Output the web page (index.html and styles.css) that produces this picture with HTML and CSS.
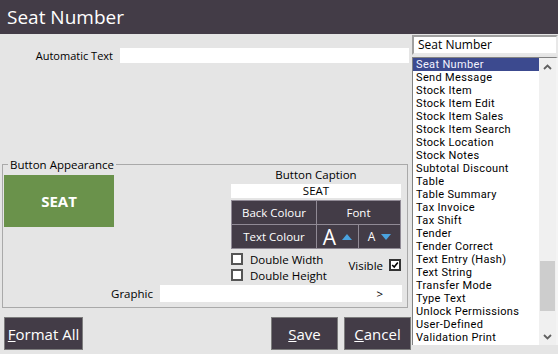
FILE: index.html
```html
<!DOCTYPE html>
<html lang="en">
<head>
    <meta charset="UTF-8" />
    <meta name="viewport" content="width=device-width, initial-scale=1" />
    <title>Seat Number</title>
    <link rel="stylesheet" href="styles.css">
</head>
<body>

    <div class="titulo">Seat Number</div>

    <div class="ventana">
        <div class="izquierda">
            <div class="fila-texto">
                <label>Automatic Text</label>
                <div class="campo campo-auto"></div>
            </div>

            <fieldset class="apariencia">
                <legend>Button Appearance</legend>
                <div class="apariencia-cuerpo">
                    <div class="vista">SEAT</div>
                    <div class="panel-caption">
                        <div class="caption-label">Button Caption</div>
                        <div class="campo campo-caption">SEAT</div>
                        <div class="rejilla">
                            <div class="celda">Back Colour</div>
                            <div class="celda doble">Font</div>
                            <div class="celda">Text Colour</div>
                            <div class="celda">
                                <span class="letra-grande">A</span>
                                <svg width="10" height="6" viewBox="0 0 10 6"><polygon points="0,6 5,0 10,6" fill="#4aa3df"/></svg>
                            </div>
                            <div class="celda">
                                <span class="letra-chica">A</span>
                                <svg width="10" height="6" viewBox="0 0 10 6"><polygon points="0,0 10,0 5,6" fill="#4aa3df"/></svg>
                            </div>
                        </div>
                        <div class="checks">
                            <div class="checks-col">
                                <div class="check"><span class="caja"></span>Double Width</div>
                                <div class="check"><span class="caja"></span>Double Height</div>
                            </div>
                            <div class="check visible">Visible<span class="caja marcada">
                                <svg width="10" height="10" viewBox="0 0 10 10"><polyline points="1.5,5 4,7.5 8.5,2" fill="none" stroke="#000" stroke-width="2"/></svg>
                            </span></div>
                        </div>
                    </div>
                </div>
                <div class="fila-grafico">
                    <label>Graphic</label>
                    <div class="campo campo-grafico">&gt;</div>
                </div>
            </fieldset>

            <div class="botones">
                <button class="boton boton-format"><u>F</u>ormat All</button>
                <button class="boton boton-save"><u>S</u>ave</button>
                <button class="boton boton-cancel"><u>C</u>ancel</button>
            </div>
        </div>

        <div class="derecha">
            <div class="combo">Seat Number</div>
            <div class="lista">
                <ul class="items">
                    <li class="seleccionado">Seat Number</li>
                    <li>Send Message</li>
                    <li>Stock Item</li>
                    <li>Stock Item Edit</li>
                    <li>Stock Item Sales</li>
                    <li>Stock Item Search</li>
                    <li>Stock Location</li>
                    <li>Stock Notes</li>
                    <li>Subtotal Discount</li>
                    <li>Table</li>
                    <li>Table Summary</li>
                    <li>Tax Invoice</li>
                    <li>Tax Shift</li>
                    <li>Tender</li>
                    <li>Tender Correct</li>
                    <li>Text Entry (Hash)</li>
                    <li>Text String</li>
                    <li>Transfer Mode</li>
                    <li>Type Text</li>
                    <li>Unlock Permissions</li>
                    <li>User-Defined</li>
                    <li>Validation Print</li>
                </ul>
                <div class="scroll">
                    <div class="flecha">
                        <svg width="9" height="6" viewBox="0 0 9 6"><polyline points="1,5 4.5,1.5 8,5" fill="none" stroke="#606060" stroke-width="1.8"/></svg>
                    </div>
                    <div class="pista"><div class="pulgar"></div></div>
                    <div class="flecha">
                        <svg width="9" height="6" viewBox="0 0 9 6"><polyline points="1,1 4.5,4.5 8,1" fill="none" stroke="#606060" stroke-width="1.8"/></svg>
                    </div>
                </div>
            </div>
        </div>
    </div>

</body>
</html>
```

FILE: styles.css
```css
body {
    font-family: 'Open Sans', 'Noto Sans', sans-serif;
    background-color: #e5e5e5;
    margin: 0;
    width: 558px;
    height: 354px;
    overflow: hidden;
    color: #000;
    font-size: 11.5px;
}

.titulo {
    background-color: #433c47;
    color: white;
    height: 34px;
    font-size: 19px;
    line-height: 34px;
    padding-left: 7px;
}

.ventana {
    display: flex;
    gap: 1px;
}

.izquierda {
    width: 411px;
    display: flex;
    flex-direction: column;
}

.campo {
    background-color: white;
    box-sizing: border-box;
}

/* fila automatic text */
.fila-texto {
    display: flex;
    align-items: center;
    margin-top: 14px;
    gap: 7px;
}

.fila-texto label {
    flex: 1;
    text-align: right;
    font-size: 11px;
}

.campo-auto {
    width: 289px;
    height: 15px;
    margin-right: 2px;
}

/* grupo button appearance */
.apariencia {
    margin: 95px 2px 0 2px;
    width: 406px;
    box-sizing: border-box;
    padding: 0 0 5px 1px;
    border: 1px solid #a9a9a9;
}

.apariencia legend {
    margin-left: 4px;
    padding: 0 2px;
    line-height: 13px;
}

.apariencia-cuerpo {
    display: flex;
    align-items: flex-start;
}

.vista {
    width: 110px;
    height: 52px;
    margin-top: 4px;
    background-color: #6a924b;
    color: white;
    font-weight: bold;
    font-size: 15px;
    display: flex;
    align-items: center;
    justify-content: center;
}

.panel-caption {
    width: 170px;
    margin-left: auto;
    margin-right: 6px;
    margin-top: -3px;
}

.caption-label {
    text-align: center;
    line-height: 14px;
}

.campo-caption {
    margin-top: 2px;
    height: 14px;
    line-height: 14px;
    text-align: center;
}

.rejilla {
    margin-top: 2px;
    display: grid;
    grid-template-columns: 84px 41px 41px;
    grid-auto-rows: 23px;
    gap: 1px;
    padding: 1px;
    background-color: #908a95;
}

.celda {
    background-color: #433c47;
    color: white;
    display: flex;
    align-items: center;
    justify-content: center;
    gap: 6px;
}

.celda.doble {
    grid-column: span 2;
}

.letra-grande {
    font-size: 21px;
    line-height: 20px;
}

.letra-chica {
    font-size: 12px;
}

.checks {
    margin-top: 2px;
    display: flex;
    justify-content: space-between;
}

.check {
    height: 16px;
    display: flex;
    align-items: center;
    gap: 7px;
}

.check.visible {
    align-self: center;
    margin-bottom: 4px;
    gap: 6px;
}

.caja {
    width: 12px;
    height: 12px;
    box-sizing: border-box;
    border: 2px solid #555;
    background-color: white;
    display: flex;
    align-items: center;
    justify-content: center;
}

.caja.marcada {
    border-color: #333;
}

.fila-grafico {
    display: flex;
    align-items: center;
    justify-content: flex-end;
    gap: 7px;
    margin-top: 2px;
}

.campo-grafico {
    width: 242px;
    height: 17px;
    margin-right: 5px;
    text-align: right;
    padding-right: 19px;
    line-height: 17px;
}

/* botones inferiores */
.botones {
    display: flex;
    margin-top: 9px;
    gap: 6px;
}

.boton {
    font-family: 'Open Sans', 'Noto Sans', sans-serif;
    background-color: #433c47;
    color: white;
    border: 1px solid #7d7d7d;
    height: 33px;
    font-size: 15px;
    padding: 0;
    cursor: pointer;
}

.boton-format {
    width: 79px;
    margin-left: 4px;
    margin-right: auto;
}

.boton-save,
.boton-cancel {
    width: 67px;
}

/* columna derecha */
.derecha {
    width: 146px;
    display: flex;
    flex-direction: column;
}

.combo {
    margin-top: 1px;
    height: 20px;
    box-sizing: border-box;
    border: 2px solid #a0a0a0;
    border-right-color: #e8e8e8;
    border-bottom-color: #e8e8e8;
    background-color: white;
    padding-left: 4px;
    line-height: 16px;
    font-size: 12px;
}

.lista {
    margin-top: 2px;
    height: 288px;
    box-sizing: border-box;
    border-top: 1px solid #828282;
    border-left: 1px solid #828282;
    border-right: 2px solid #f4f4f4;
    background-color: white;
    display: flex;
}

.items {
    list-style: none;
    margin: 0;
    padding: 0;
    flex: 1;
    font-family: Roboto, 'Open Sans', sans-serif;
    font-size: 11px;
    letter-spacing: 0.35px;
}

.items li {
    height: 13px;
    line-height: 13px;
    padding-left: 3px;
    white-space: nowrap;
}

.items li.seleccionado {
    background-color: #3c4a8f;
    color: #f4f4ff;
}

.scroll {
    width: 17px;
    background-color: #f0f0f0;
    display: flex;
    flex-direction: column;
}

.flecha {
    height: 17px;
    display: flex;
    align-items: center;
    justify-content: center;
}

.pista {
    flex: 1;
}

.pulgar {
    margin: 186px 1px 0 1px;
    height: 50px;
    background-color: #cdcdcd;
}
```
